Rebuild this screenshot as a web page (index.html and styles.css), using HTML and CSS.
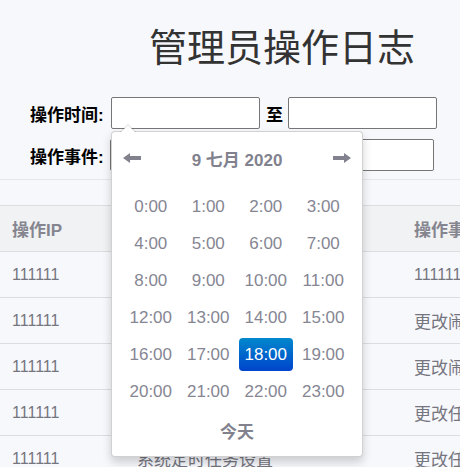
FILE: index.html
```html
<!DOCTYPE html>
<html>
<head>
<meta charset="utf-8">
<title>管理员操作日志</title>
<link rel="stylesheet" href="styles.css">
</head>
<body>
<div class="page">
  <h1 class="title">管理员操作日志</h1>
  <form class="filters">
    <div class="row">
      <label class="label">操作时间:</label>
      <input class="field" type="text">
      <span class="to">至</span>
      <input class="field" type="text">
    </div>
    <div class="row">
      <label class="label">操作事件:</label>
      <input class="field wide" type="text">
    </div>
  </form>
  <div class="divider"></div>
  <table class="log">
    <colgroup><col class="c1"><col class="c2"><col class="c3"></colgroup>
    <thead>
      <tr><th>操作IP</th><th>操作时间</th><th>操作事件</th></tr>
    </thead>
    <tbody>
      <tr><td class="num">111111</td><td>2020-07-09 18:00</td><td class="num">111111</td></tr>
      <tr><td class="num">111111</td><td>闹钟设置</td><td>更改闹钟设置</td></tr>
      <tr><td class="num">111111</td><td>闹钟设置</td><td>更改闹钟设置</td></tr>
      <tr><td class="num">111111</td><td>系统定时任务设置</td><td>更改任务设置</td></tr>
      <tr><td class="num">111111</td><td>系统定时任务设置</td><td>更改任务设置</td></tr>
    </tbody>
  </table>

  <div class="picker">
    <div class="picker-head">
      <span class="nav"><svg width="18" height="10" viewBox="0 0 18 10"><path d="M0 5 L7 0 V3 H18 V7 H7 V10 Z" fill="#82828f"/></svg></span>
      <span class="picker-title">9 七月 2020</span>
      <span class="nav"><svg width="18" height="10" viewBox="0 0 18 10"><path d="M18 5 L11 0 V3 H0 V7 H11 V10 Z" fill="#82828f"/></svg></span>
    </div>
    <div class="hours">
      <span class="hour">0:00</span><span class="hour">1:00</span><span class="hour">2:00</span><span class="hour">3:00</span>
      <span class="hour">4:00</span><span class="hour">5:00</span><span class="hour">6:00</span><span class="hour">7:00</span>
      <span class="hour">8:00</span><span class="hour">9:00</span><span class="hour">10:00</span><span class="hour">11:00</span>
      <span class="hour">12:00</span><span class="hour">13:00</span><span class="hour">14:00</span><span class="hour">15:00</span>
      <span class="hour">16:00</span><span class="hour">17:00</span><span class="hour active">18:00</span><span class="hour">19:00</span>
      <span class="hour">20:00</span><span class="hour">21:00</span><span class="hour">22:00</span><span class="hour">23:00</span>
    </div>
    <div class="picker-foot">今天</div>
  </div>
</div>
</body>
</html>
```

FILE: styles.css
```css
html, body {
  margin: 0;
  padding: 0;
  background: #f7f8fc;
  overflow: hidden;
}
.page {
  position: relative;
  width: 460px;
  height: 467px;
  overflow: hidden;
  font-family: "Liberation Sans", Arial, "Noto Sans CJK SC", sans-serif;
}
.title {
  margin: 0;
  padding: 23px 0 0 149px;
  font-family: "Noto Sans CJK SC", sans-serif;
  font-size: 38px;
  line-height: 44px;
  font-weight: normal;
  color: #333;
  white-space: nowrap;
}
.filters {
  margin: 30px 0 0 30px;
  display: flex;
  flex-direction: column;
  gap: 10px;
}
.row {
  display: flex;
  align-items: center;
  height: 32px;
}
.label, .to {
  font-size: 17px;
  font-weight: bold;
  color: #000;
  white-space: nowrap;
}
.label {
  width: 76px;
  margin-right: 5px;
}
.to {
  margin: 0 5px 0 6px;
}
.field {
  box-sizing: border-box;
  width: 149px;
  height: 32px;
  margin: 0;
  border: 1px solid #767676;
  border-radius: 2px;
  background: #fff;
}
.field.wide {
  width: 324px;
  margin-left: -1px;
}
.divider {
  margin-top: 8px;
  height: 1px;
  background: #e6e7ea;
}
.log {
  margin-top: 25px;
  border-collapse: collapse;
  table-layout: fixed;
  width: 600px;
  font-family: "Liberation Sans", Arial, "Noto Sans CJK SC", sans-serif;
}
.c1 { width: 125px; }
.c2 { width: 277px; }
.c3 { width: 198px; }
.log th, .log td {
  height: 45px;
  padding: 0 12px;
  text-align: left;
  white-space: nowrap;
  overflow: hidden;
  border-top: 1px solid #dcdde0;
  font-family: "Liberation Sans", Arial, "Noto Sans CJK SC", sans-serif;
}
.log th {
  background: #f1f2f4;
  font-size: 17px;
  font-weight: bold;
  color: #85858f;
  border-bottom: 1px solid #dcdde0;
}
.log td {
  font-size: 17px;
  color: #75757f;
}
.log td.num {
  font-size: 16px;
}
.picker {
  position: absolute;
  left: 111px;
  top: 131px;
  box-sizing: border-box;
  width: 252px;
  height: 326px;
  padding: 4px 10px 0;
  background: #fff;
  border: 1px solid rgba(0, 0, 0, 0.18);
  border-radius: 4px;
  box-shadow: 0 5px 10px rgba(0, 0, 0, 0.18);
  color: #868693;
}
.picker::before {
  content: "";
  position: absolute;
  top: -8px;
  left: 8px;
  border-left: 8px solid transparent;
  border-right: 8px solid transparent;
  border-bottom: 8px solid rgba(0, 0, 0, 0.15);
}
.picker::after {
  content: "";
  position: absolute;
  top: -7px;
  left: 9px;
  border-left: 7px solid transparent;
  border-right: 7px solid transparent;
  border-bottom: 7px solid #fff;
}
.picker-head {
  display: flex;
  align-items: center;
  justify-content: space-between;
  height: 44px;
  padding: 0 1px;
}
.nav {
  display: flex;
  align-items: center;
}
.picker-title {
  font-size: 17px;
  font-weight: bold;
  color: #82828f;
}
.hours {
  margin-top: 8px;
  display: grid;
  grid-template-columns: repeat(4, 1fr);
  grid-auto-rows: 37px;
}
.hour {
  margin: 2px;
  border-radius: 4px;
  font-size: 17px;
  line-height: 33px;
  text-align: center;
}
.hour.active {
  background: linear-gradient(#0088cc, #0044cc);
  color: #fff;
}
.picker-foot {
  height: 46px;
  line-height: 46px;
  text-align: center;
  font-size: 17px;
  font-weight: bold;
  color: #82828f;
}
```
